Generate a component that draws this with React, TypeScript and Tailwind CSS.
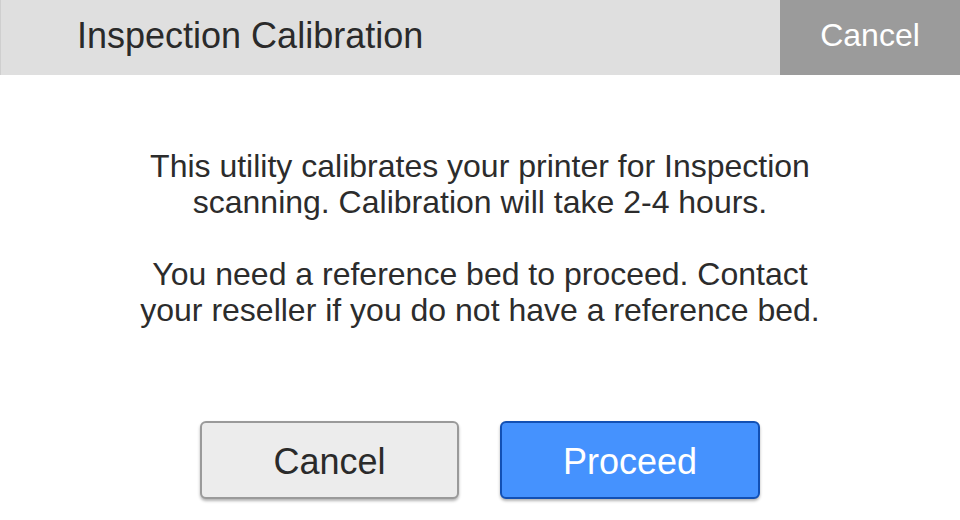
export default function App() {
  return (
    <div className="w-[960px] h-[520px] bg-white flex flex-col overflow-hidden font-['Liberation_Sans',Arial,sans-serif]">
      <header className="h-[75px] flex items-stretch bg-[#dfdfdf] border-l border-[#cfcfcf]">
        <h1 className="flex-1 flex items-center pl-[76px] text-[36px] text-[#2a2a2a] pb-[4px]">
          Inspection Calibration
        </h1>
        <button className="w-[180px] bg-[#9b9b9b] text-white text-[32px] flex items-center justify-center pb-[6px]">
          Cancel
        </button>
      </header>
      <main className="flex-1 flex flex-col items-center">
        <p className="mt-[73px] text-center text-[32px] leading-[36px] text-[#2c2c2c]">
          This utility calibrates your printer for Inspection
          <br />
          scanning. Calibration will take 2-4 hours.
          <br />
          <br />
          You need a reference bed to proceed. Contact
          <br />
          your reseller if you do not have a reference bed.
        </p>
        <div className="mt-[93px] flex gap-[41px]">
          <button className="w-[259px] h-[78px] rounded-[6px] bg-[#ececec] border-2 border-[#9a9a9a] shadow-[0_2px_3px_rgba(0,0,0,0.3)] text-[36px] text-[#2a2a2a] pt-[3px]">
            Cancel
          </button>
          <button className="w-[260px] h-[78px] rounded-[6px] bg-[#4592fe] border-2 border-[#1250b4] shadow-[0_2px_3px_rgba(0,0,0,0.3)] text-[36px] text-white pt-[3px]">
            Proceed
          </button>
        </div>
      </main>
    </div>
  );
}
